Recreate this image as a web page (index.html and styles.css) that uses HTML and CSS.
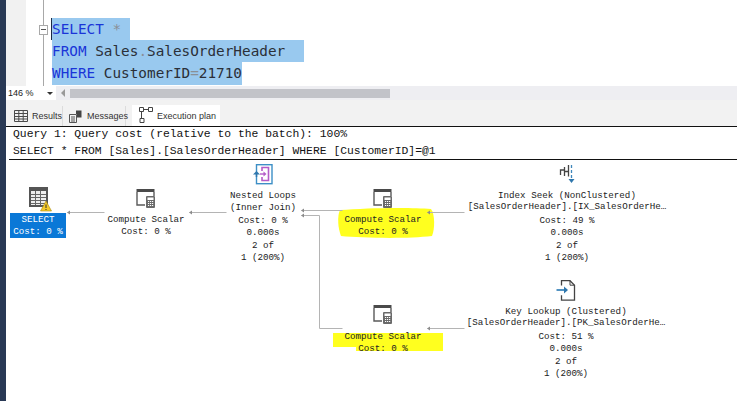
FILE: index.html
```html
<!DOCTYPE html>
<html lang="en">
<head>
<meta charset="utf-8">
<title>Execution plan</title>
<link rel="stylesheet" href="styles.css">
</head>
<body>
<div class="app">
  <aside class="edge"></aside>
  <main class="main">
    <section class="editor">
      <div class="margin"></div>
      <div class="fold-col"><span class="fold"></span></div>
      <div class="code">
        <div class="line"><span class="sel sel-1"><span class="kw">SELECT</span> <span class="op">*</span></span></div>
        <div class="line"><span class="sel sel-2"><span class="kw">FROM</span> Sales<span class="op">.</span>SalesOrderHeader</span></div>
        <div class="line"><span class="sel sel-3"><span class="kw">WHERE</span> CustomerID<span class="op">=</span>21710</span></div>
      </div>
    </section>
    <section class="zoombar">
      <div class="zoom"><span>146 %</span><span class="caret"></span></div>
      <span class="left-arrow"></span>
      <div class="track"><div class="thumb"></div></div>
    </section>
    <nav class="tabs">
      <div class="tab tab-res">
        <svg width="14" height="12" viewBox="0 0 14 12"><path d="M.5.5h13v11H.5zM.5 3.500h13M.5 6.500h13M.5 9h13M4.800.5v11M9.200.5v11" fill="none" stroke="#4a4a4a"/></svg>
        <span>Results</span>
      </div>
      <div class="tab tab-msg">
        <svg width="13" height="13" viewBox="0 0 13 13"><path d="M.5 4.500h7v8h-7zM2 7h4M2 9h4M2 11h4" fill="none" stroke="#555"/><path d="M7 .5h5.500v7H8V4H7z" fill="#444"/></svg>
        <span>Messages</span>
      </div>
      <div class="tab tab-on">
        <svg width="14" height="17" viewBox="0 0 14 17"><path d="M.5.5h4v4h-4zM9.500.5h4v4h-4zM1 11.500h4v4H1zM4.500 2.500h5M2.500 4.500v7" fill="none" stroke="#444"/></svg>
        <span>Execution plan</span>
      </div>
    </nav>
    <header class="query">
      <div>Query 1: Query cost (relative to the batch): 100%</div>
      <div>SELECT * FROM [Sales].[SalesOrderHeader] WHERE [CustomerID]=@1</div>
    </header>
    <section class="canvas">
      <svg class="wires" width="731" height="241" viewBox="6 160 731 241">
        <path d="M340 210c25-2 70-3 91-1 4 5 4 20 1 27-25 3-70 2-91 0-3-7-4-20-1-26z" fill="#ffff1f"/>
        <path d="M333 333h110v18H356v-4h-23z" fill="#ffff1f"/>
        <g fill="none" stroke="#b4b4b4">
          <path d="M67.500 212.500h37M189.500 212.500h37M427.500 212.500h37M427.500 328.500h37"/>
          <path d="M301.500 210.500h41M301.500 215.500h18v113h23"/>
        </g>
        <path d="M67 212.500l3-2v4zM189 212.500l3-2v4zM427 212.500l3-2v4zM427 328.500l3-2v4zM301 210.500l3-2v4zM301 215.500l3-2v4z" fill="#8c8c8c"/>
      </svg>

      <div class="node n-select">
        <svg class="ico" width="24" height="26" viewBox="0 0 24 26">
          <rect x="1" y="0" width="19" height="20" fill="#555"/>
          <path d="M3 4h15v14H3z" fill="#eee"/>
          <path d="M3 7.500h15M3 10.500h15M3 13.500h15M3 16.500h15M7.500 4v14M12.500 4v14" stroke="#666"/>
          <path d="M18 14l5.500 10h-11z" fill="#f4c92b" stroke="#a88a10" stroke-width=".6"/>
          <path d="M18 17.500v3.500M18 22v1" stroke="#333"/>
        </svg>
        <div class="label label-sel"><div>SELECT</div><div>Cost: 0 %</div></div>
      </div>

      <div class="node n-c1">
        <svg class="ico" width="20" height="20" viewBox="0 0 20 20"><use href="#calc"/></svg>
        <div class="label"><div>Compute Scalar</div><div>Cost: 0 %</div></div>
      </div>

      <div class="node n-loops">
        <svg class="ico" width="20" height="21" viewBox="0 0 20 21">
          <rect x="3.500" y=".7" width="15.500" height="19" fill="#fff" stroke="#3d8fc6" stroke-width="1.400"/>
          <path d="M9 7V3.500h6.500v13H9V13" fill="none" stroke="#b45cc8" stroke-width="1.600"/>
          <path d="M7 10h4" stroke="#b45cc8" stroke-width="1.400"/>
          <path d="M10.500 7.500l3 2.500-3 2.500z" fill="#b45cc8"/>
          <path d="M0 10.500l3.500-3.500 3.500 3.500z" fill="#2f77ad"/><path d="M3.500 10v3" stroke="#2f77ad" stroke-width="1.500"/>
        </svg>
        <div class="label label-tall">
          <div>Nested Loops</div><div>(Inner Join)</div><div>Cost: 0 %</div><div>0.000s</div><div>2 of</div><div>1 (200%)</div>
        </div>
      </div>

      <div class="node n-c2">
        <svg class="ico" width="20" height="20" viewBox="0 0 20 20"><use href="#calc"/></svg>
        <div class="label"><div>Compute Scalar</div><div>Cost: 0 %</div></div>
      </div>

      <div class="node n-seek">
        <svg class="ico" width="16" height="21" viewBox="0 0 16 21">
          <path d="M1.500 11V6h4M5.500 12V3M5.500 7.500h4V1M9.500 7.500v5" fill="none" stroke="#444" stroke-width="1.300"/>
          <path d="M12.500 1v3M12.500 6v3M12.500 11v3" stroke="#3f87bb" stroke-width="1.300"/>
          <path d="M9.500 15h6l-3 4z" fill="#2f77ad"/>
        </svg>
        <div class="label label-tall">
          <div class="tight">Index Seek (NonClustered)</div><div class="tight gap">[SalesOrderHeader].[IX_SalesOrderHe…</div><div>Cost: 49 %</div><div>0.000s</div><div>2 of</div><div>1 (200%)</div>
        </div>
      </div>

      <div class="node n-c3">
        <svg class="ico" width="20" height="20" viewBox="0 0 20 20"><use href="#calc"/></svg>
        <div class="label label-low"><div>Compute Scalar</div><div>Cost: 0 %</div></div>
      </div>

      <div class="node n-key">
        <svg class="ico" width="20" height="21" viewBox="0 0 20 21">
          <path d="M5.500 5.500V.7h8.500l4.500 4.500v15H5.500v-5" fill="#fff" stroke="#444" stroke-width="1.300"/>
          <path d="M14 .7v4.500h4.500" fill="none" stroke="#444"/>
          <path d="M.5 10h8" stroke="#3f87bb" stroke-width="1.800"/>
          <path d="M8 6.500l4 3.500-4 3.500z" fill="#2f77ad"/>
        </svg>
        <div class="label label-tall">
          <div class="tight">Key Lookup (Clustered)</div><div class="tight gap">[SalesOrderHeader].[PK_SalesOrderHe…</div><div>Cost: 51 %</div><div>0.000s</div><div>2 of</div><div>1 (200%)</div>
        </div>
      </div>
    </section>
  </main>
</div>
<svg class="defs" width="0" height="0">
  <symbol id="calc" viewBox="0 0 20 20">
    <path d="M.5 1h18v3H.5z" fill="#4a4a4a"/>
    <path d="M1 4v13h8M18 4v4" fill="none" stroke="#5a5a5a" stroke-width="1.400"/>
    <rect x="10" y="8" width="9" height="12" rx="1" fill="#6a6a6a"/>
    <rect x="11.500" y="9.500" width="6" height="2.500" fill="#fff"/>
    <path d="M12 13.500h1.200M14 13.500h1.200M16 13.500h1.200M12 15.500h1.200M14 15.500h1.200M16 15.500h1.200M12 17.500h1.200M14 17.500h1.200M16 17.500h1.200" stroke="#fff"/>
  </symbol>
</svg>
</body>
</html>
```
FILE: styles.css
```css
* { box-sizing: border-box; }
html, body { margin: 0; height: 100%; overflow: hidden; background: #fff; }

.app { display: flex; width: 737px; height: 401px; }
.edge { width: 6px; flex: none; background: #293955; }
.main { flex: 1; display: flex; flex-direction: column; min-width: 0; }

/* Editor */
.editor { height: 86px; display: flex; flex: none; background: #fff; }
.margin { width: 20px; background: #f1f1f1; }
.fold-col { width: 26px; position: relative; }
.fold-col::before { content: ""; position: absolute; left: 17px; top: 0; bottom: 0; width: 1px; background: #a8a8a8; }
.fold { position: absolute; left: 13px; top: 25px; width: 9px; height: 10px; background: #fff; border: 1px solid #a8a8a8; }
.fold::after { content: ""; position: absolute; left: 1px; right: 1px; top: 3px; height: 1px; background: #555; }
.code { padding-top: 18px; font: 14.35px/22px "DejaVu Sans Mono", monospace; color: #2b2f38; }
.line { height: 22px; white-space: pre; }
.sel { display: inline-block; height: 22px; background: #99c9ef; }
.sel-1 { width: 79px; margin-left: -1px; border-left: 1px solid #1c2a44; }
.sel-2 { width: 252px; }
.sel-3 { width: 190px; height: 23px; }
.kw { color: #1a35d8; }
.op { color: #8a8f96; }

/* Zoom bar */
.zoombar { height: 14px; flex: none; display: flex; align-items: center; background: #eeeef2; }
.zoom { width: 50px; height: 14px; display: flex; align-items: center; justify-content: space-between; padding: 0 3px 0 2px; background: #fff; font: 9px "Liberation Sans", sans-serif; color: #222; }
.caret { border: 3px solid transparent; border-top-color: #333; border-bottom: 0; }
.left-arrow { margin-left: 5px; border: 4px solid transparent; border-right-color: #9a9a9a; border-left: 0; }
.track { flex: 1; margin-left: 5px; height: 9px; }
.thumb { width: 320px; height: 9px; background: #c2c3c9; }

/* Tabs */
.tabs { height: 27px; flex: none; display: flex; align-items: flex-end; background: #f2f2f2; border-bottom: 1px solid #111; font: 9px "Liberation Sans", sans-serif; color: #333; white-space: nowrap; }
.tab { display: flex; align-items: center; height: 20px; gap: 4px; }
.tab svg { flex: none; }
.tab-res { width: 57px; padding-left: 8px; border-right: 1px solid #dcdcdc; }
.tab-msg { width: 63px; padding-left: 6px; gap: 5px; border-right: 1px solid #dcdcdc; }
.tab-on { height: 21px; width: 88px; margin-left: 6px; background: #fff; padding-left: 7px; gap: 4px; }

/* Query header */
.query { flex: none; height: 33px; margin-left: 3px; padding-left: 4px; display: flex; flex-direction: column; gap: 2px; border-bottom: 1px solid #111; font: 11.37px/15px "Liberation Mono", monospace; color: #111; }
.query div { white-space: pre; }

/* Plan canvas */
.canvas { flex: 1; position: relative; background: #fff; }
.wires { position: absolute; left: 0; top: 0; }
.defs { position: absolute; }
.node { position: absolute; display: flex; flex-direction: column; align-items: center; width: 220px; font: 9.2px/12.4px "Liberation Mono", monospace; color: #222; text-align: center; }
.ico { flex: none; display: block; }
.label { margin-top: 6px; }
.label div { white-space: pre; }
.label-tall { margin-top: 5px; }
.label-low { margin-top: 7px; }
.tight { line-height: 11px; }
.gap { margin-bottom: 3px; }
.label-sel { width: 56px; height: 25px; margin-top: 0; padding-top: 1px; background: #0a78d7; color: #fff; }

.n-select { left: -78px; top: 27px; }
.n-select .ico { margin-left: 4px; }
.n-c1 { left: 30px; top: 28px; }
.n-loops { left: 147px; top: 4px; }
.n-c2 { left: 267px; top: 28px; }
.n-seek { left: 451px; top: 4px; }
.n-c3 { left: 267px; top: 144px; }
.n-key { left: 450px; top: 120px; }
```
